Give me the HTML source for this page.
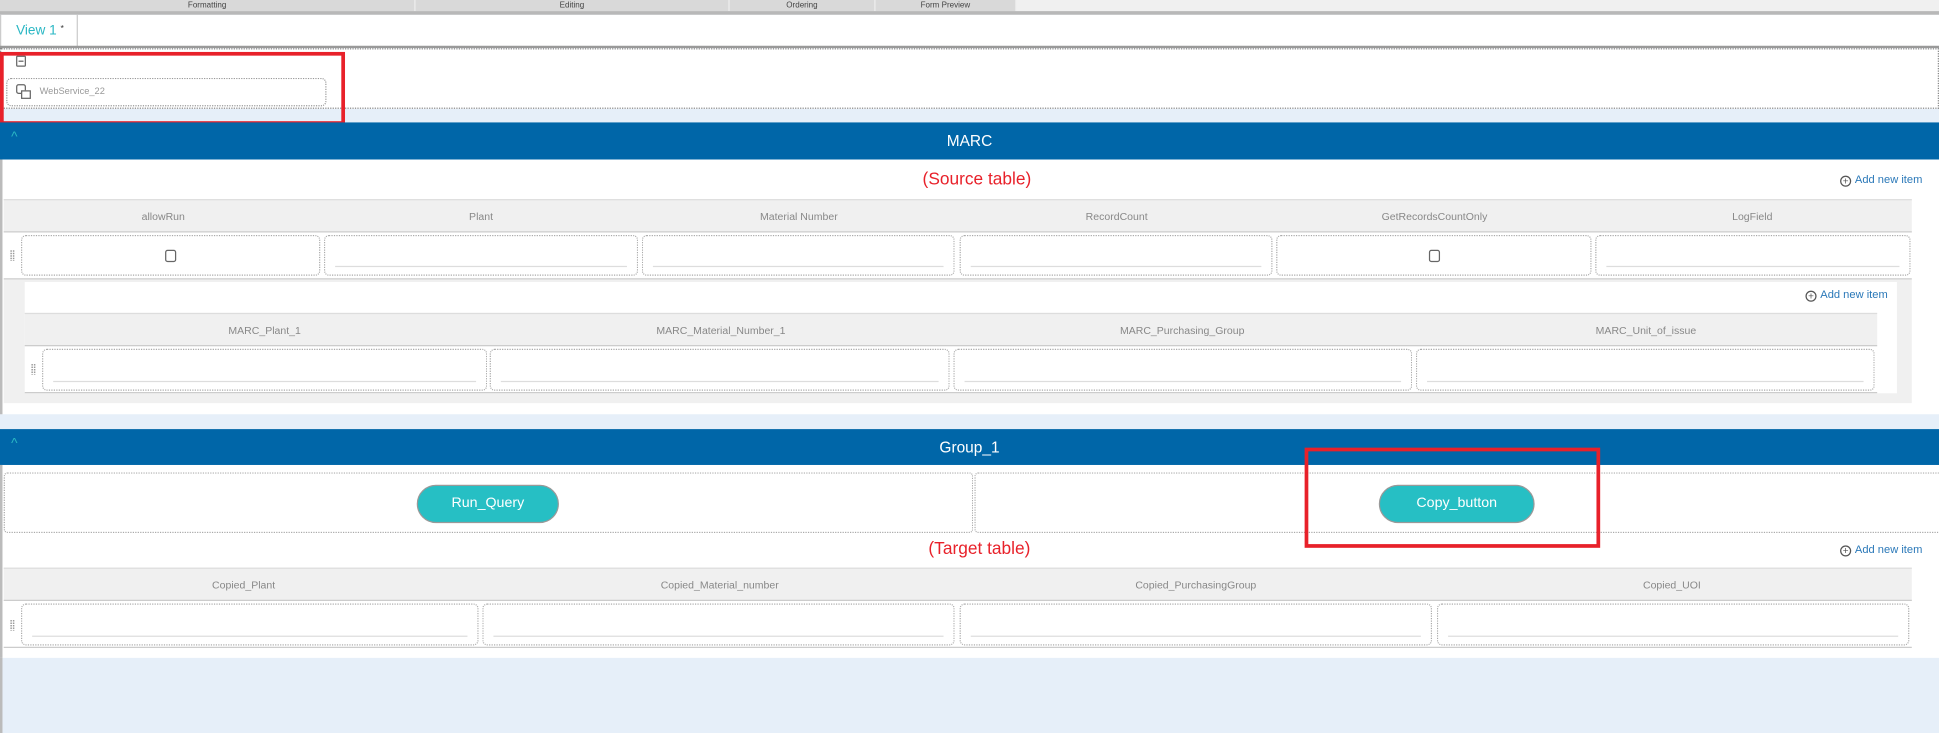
<!DOCTYPE html>
<html><head><meta charset="utf-8">
<style>
*{margin:0;padding:0;box-sizing:border-box}
html,body{width:1939px;height:733px;overflow:hidden;background:#e6eff9;font-family:"Liberation Sans",sans-serif}
#w{position:absolute;left:0;top:0;width:1568px;height:593px;transform:scale(1.23661);transform-origin:0 0;background:#e6eff9}
.a{position:absolute}
.tab{position:absolute;top:0;height:9px;font-size:6.5px;color:#444;text-align:center;line-height:9px;border-right:1px solid #eee}
.hdr{position:absolute;left:0;width:1568px;height:30px;background:#0066a8;color:#fff;font-size:12.5px;text-align:center;line-height:30px}
.chev{position:absolute;left:9px;top:-3px;color:#2ab7c4;font-size:11px}
.th{position:absolute;height:27px;background:#f0f0f0;border-top:1px solid #ddd;border-bottom:1px solid #ccc}
.th span{position:absolute;top:0;line-height:26px;font-size:8.5px;color:#888;transform:translateX(-50%);white-space:nowrap}
.cell{position:absolute;background:#fff;border:1px dotted #aaa;border-radius:4px}
.cell.in::after{content:"";position:absolute;left:8px;right:8px;bottom:6px;height:1px;background:#ddd}
.cb{position:absolute;width:9px;height:10px;border:1px solid #666;border-radius:2px;left:50%;top:50%;transform:translate(-50%,-50%)}
.grip{position:absolute;width:4px;height:9px;background-image:radial-gradient(#999 0.6px,transparent 0.8px);background-size:2px 2px}
.add{position:absolute;font-size:9px;color:#2a78b8;white-space:nowrap}
.add i{display:inline-block;width:9px;height:9px;border:1px solid #555;border-radius:50%;font-style:normal;font-size:8px;line-height:7px;text-align:center;color:#555;margin-right:3px;vertical-align:-1px}
.red{position:absolute;border:3px solid #e8212a}
.btn{position:absolute;height:31px;background:#26bfc4;border:1px solid #999;border-radius:16px;color:#fff;font-size:11.5px;text-align:center;line-height:29px}
.lbl{position:absolute;color:#e8212a;font-size:14px;transform:translateX(-50%);white-space:nowrap}
</style></head><body><div id="w">
<div class="a" style="left:0;top:0;width:1568px;height:10px;background:#f0f0f0"></div>
<div class="tab" style="left:0;width:336px;background:#d9d9d9">Formatting</div>
<div class="tab" style="left:336px;width:254px;background:#d9d9d9">Editing</div>
<div class="tab" style="left:590px;width:118px;background:#d9d9d9">Ordering</div>
<div class="tab" style="left:708px;width:114px;background:#d9d9d9">Form Preview</div>
<div class="a" style="left:0;top:9px;width:1568px;height:3px;background:#b8b8b8"></div>
<div class="a" style="left:0;top:12px;width:1568px;height:26px;background:#fff"></div>
<div class="a" style="left:0;top:12px;width:63px;height:26px;border-right:1px solid #ccc;border-left:1px solid #ccc"></div>
<div class="a" style="left:13px;top:12px;font-size:11px;color:#2ab7c4;line-height:24px;white-space:nowrap">View 1 <span style="font-size:7px;color:#333;vertical-align:3px">*</span></div>
<div class="a" style="left:0;top:37px;width:1568px;height:2px;background:#999"></div>
<div class="a" style="left:0;top:39px;width:1568px;height:49px;background:#fff;border:1px dotted #888"></div>
<div class="a" style="left:13px;top:45px;width:8px;height:9px;border:1px solid #666;border-radius:1px"><div style="position:absolute;left:1px;top:3px;width:4px;height:1px;background:#666"></div></div>
<div class="a" style="left:5px;top:63px;width:259px;height:23px;border:1px dotted #999;border-radius:4px;background:#fff"></div>
<div class="a" style="left:13px;top:68px;width:8px;height:8px;border:1px solid #666;border-radius:2px"></div>
<div class="a" style="left:17px;top:73px;width:8px;height:7px;border:1px solid #666;background:#fff"></div>
<div class="a" style="left:32px;top:69px;font-size:7.5px;color:#999">WebService_22</div>
<div class="red" style="left:0;top:42px;width:279px;height:59px"></div>
<div class="hdr" style="top:99px">MARC<span class="chev">^</span></div>
<div class="a" style="left:0;top:129px;width:1568px;height:206px;background:#fff;border-left:2px solid #bbb"></div>
<div class="lbl" style="left:790px;top:136px">(Source table)</div>
<div class="add" style="left:1488px;top:140px"><i>+</i>Add new item</div>
<div class="th" style="left:3px;top:161px;width:1543px">
<span style="left:129px">allowRun</span><span style="left:386px">Plant</span><span style="left:643px">Material Number</span><span style="left:900px">RecordCount</span><span style="left:1157px">GetRecordsCountOnly</span><span style="left:1414px">LogField</span></div>
<div class="a" style="left:3px;top:188px;width:1543px;height:38px;border-bottom:1px solid #ccc"></div>
<div class="grip" style="left:8px;top:202px"></div>
<div class="cell" style="left:17px;top:190px;width:242px;height:33px"><div class="cb"></div></div>
<div class="cell in" style="left:262px;top:190px;width:254px;height:33px"></div>
<div class="cell in" style="left:519px;top:190px;width:253px;height:33px"></div>
<div class="cell in" style="left:776px;top:190px;width:253px;height:33px"></div>
<div class="cell" style="left:1032px;top:190px;width:255px;height:33px"><div class="cb"></div></div>
<div class="cell in" style="left:1290px;top:190px;width:255px;height:33px"></div>
<div class="a" style="left:3px;top:226px;width:1543px;height:100px;background:#f0f0f0"></div>
<div class="a" style="left:20px;top:228px;width:1514px;height:90px;background:#fff"></div>
<div class="add" style="left:1460px;top:233px"><i>+</i>Add new item</div>
<div class="th" style="left:20px;top:253px;width:1498px">
<span style="left:194px">MARC_Plant_1</span><span style="left:563px">MARC_Material_Number_1</span><span style="left:936px">MARC_Purchasing_Group</span><span style="left:1311px">MARC_Unit_of_issue</span></div>
<div class="a" style="left:20px;top:281px;width:1498px;height:37px;border-bottom:1px solid #ccc"></div>
<div class="grip" style="left:25px;top:294px"></div>
<div class="cell in" style="left:34px;top:282px;width:360px;height:34px"></div>
<div class="cell in" style="left:396px;top:282px;width:372px;height:34px"></div>
<div class="cell in" style="left:771px;top:282px;width:371px;height:34px"></div>
<div class="cell in" style="left:1145px;top:282px;width:371px;height:34px"></div>
<div class="hdr" style="top:347px">Group_1<span class="chev">^</span></div>
<div class="a" style="left:0;top:376px;width:1568px;height:156px;background:#fff;border-left:2px solid #bbb"></div>
<div class="cell" style="left:3px;top:382px;width:784px;height:49px;border-radius:3px"></div>
<div class="cell" style="left:788px;top:382px;width:782px;height:49px;border-radius:3px"></div>
<div class="btn" style="left:337px;top:392px;width:115px">Run_Query</div>
<div class="btn" style="left:1115px;top:392px;width:126px">Copy_button</div>
<div class="red" style="left:1055px;top:362px;width:239px;height:81px"></div>
<div class="lbl" style="left:792px;top:435px">(Target table)</div>
<div class="add" style="left:1488px;top:439px"><i>+</i>Add new item</div>
<div class="th" style="left:3px;top:459px;width:1543px">
<span style="left:194px">Copied_Plant</span><span style="left:579px">Copied_Material_number</span><span style="left:964px">Copied_PurchasingGroup</span><span style="left:1349px">Copied_UOI</span></div>
<div class="a" style="left:3px;top:487px;width:1543px;height:37px;border-bottom:1px solid #ccc"></div>
<div class="grip" style="left:8px;top:501px"></div>
<div class="cell in" style="left:17px;top:488px;width:370px;height:34px"></div>
<div class="cell in" style="left:390px;top:488px;width:382px;height:34px"></div>
<div class="cell in" style="left:776px;top:488px;width:382px;height:34px"></div>
<div class="cell in" style="left:1162px;top:488px;width:382px;height:34px"></div>
<div class="a" style="left:0;top:532px;width:2px;height:61px;background:#bbb"></div>
</div></body></html>
